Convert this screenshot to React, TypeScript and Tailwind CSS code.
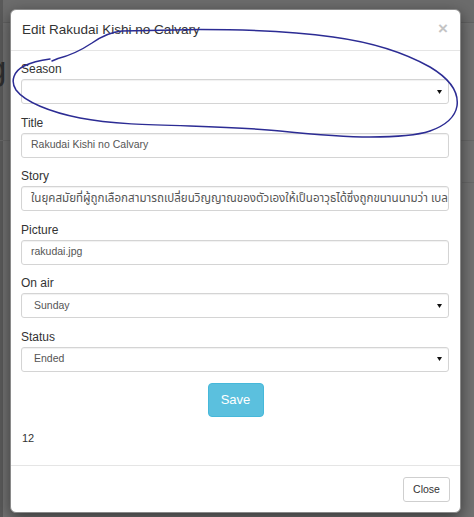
import React from "react";

function Arrow() {
  return (
    <svg width="5" height="5" viewBox="0 0 5 5" className="absolute right-[6px] top-1/2 -translate-y-1/2">
      <path d="M0 0.5 L5 0.5 L2.5 4.5 Z" fill="#111" />
    </svg>
  );
}

function Field({ label, children }: { label: string; children: React.ReactNode }) {
  return (
    <div className="flex flex-col">
      <div className="h-[16px] mb-[2px] text-[12px] leading-[16px] text-[#333]">{label}</div>
      {children}
    </div>
  );
}

function Input({ value, thai }: { value: string; thai?: boolean }) {
  return (
    <div
      className={`h-[25px] w-[428px] border border-[#d4d4d4] rounded-[3px] bg-white shadow-[inset_0_1px_1px_rgba(0,0,0,0.06)] pl-[9px] pr-[2px] flex items-center overflow-hidden whitespace-nowrap text-[#555] ${
        thai ? "text-[11.6px] font-['Noto_Sans_Thai','Noto_Sans','DejaVu_Sans',sans-serif]" : "text-[10.5px]"
      }`}
    >
      {value}
    </div>
  );
}

function Select({ value }: { value: string }) {
  return (
    <div className="relative h-[25px] w-[428px] border border-[#d4d4d4] rounded-[3px] bg-white shadow-[inset_0_1px_1px_rgba(0,0,0,0.06)] pl-[12px] flex items-center text-[10.5px] text-[#555]">
      {value}
      <Arrow />
    </div>
  );
}

export default function App() {
  return (
    <div className="relative w-[474px] h-[517px] overflow-hidden bg-[#727272] font-['Liberation_Sans',Arial,sans-serif]">
      {/* page behind the backdrop */}
      <div className="absolute inset-x-0 top-0 h-[23px] bg-[#6c6c6c] border-b border-[#626262]" />
      <div className="absolute left-0 top-0 bottom-0 w-[3px] bg-[#5a5a5a]" />
      <div className="absolute inset-x-0 top-[140px] h-px bg-[#686868]" />
      <div className="absolute right-0 w-[12px] top-[182px] h-px bg-[#686868]" />
      <div className="absolute left-[-12px] top-[52px] text-[33px] leading-none text-[#2e2e2e]">g</div>

      <div className="relative pl-[10px] pt-[9px]">
        <div className="w-[451px] h-[504px] bg-white rounded-[6px] border border-[#8a8a8a] shadow-[0_5px_15px_rgba(0,0,0,0.5)] flex flex-col overflow-hidden">
          {/* header */}
          <div className="h-[41px] shrink-0 border-b border-[#e5e5e5] flex items-center justify-between pl-[11px] pr-[12px]">
            <div className="text-[13.5px] text-[#333] pt-[1px]">Edit Rakudai Kishi no Calvary</div>
            <div className="text-[17px] font-bold leading-none text-[#c4c4c4] -mt-[4px]">×</div>
          </div>

          {/* body */}
          <div className="h-[414px] shrink-0 px-[10px] pt-[10px] flex flex-col">
            <div className="flex flex-col gap-[10.5px]">
              <Field label="Season">
                <Select value="" />
              </Field>
              <Field label="Title">
                <Input value="Rakudai Kishi no Calvary" />
              </Field>
              <Field label="Story">
                <Input thai value="ในยุคสมัยที่ผู้ถูกเลือกสามารถเปลี่ยนวิญญาณของตัวเองให้เป็นอาวุธได้ซึ่งถูกขนานนามว่า เบลเซอร์ และเด็กหนุ่มผู้ถูกขนานนามว่าอัศวินดีดตก" />
              </Field>
              <Field label="Picture">
                <Input value="rakudai.jpg" />
              </Field>
              <Field label="On air">
                <Select value="Sunday" />
              </Field>
              <Field label="Status">
                <Select value="Ended" />
              </Field>
            </div>
            <div className="flex justify-center mt-[11.5px]">
              <button className="w-[56px] h-[34px] rounded-[4px] bg-[#5bc0de] border border-[#46b8da] text-white text-[13px]">
                Save
              </button>
            </div>
            <div className="mt-[13px] h-[16px] leading-[16px] text-[11px] text-[#333] pl-[1px]">12</div>
          </div>

          {/* footer */}
          <div className="border-t border-[#e5e5e5] pt-[11px] pr-[10px] flex justify-end">
            <button className="w-[47px] h-[25px] rounded-[3px] bg-white border border-[#cfcfcf] text-[10.5px] text-[#333]">
              Close
            </button>
          </div>
        </div>
      </div>

      {/* hand-drawn annotation */}
      <svg className="absolute inset-0 pointer-events-none" width="474" height="517" viewBox="0 0 474 517">
        <path
          d="M52 61 L58 58.5 C68 56 80 51 92 43 C102 36 110 32 122 31 L200 29.5 C240 29.5 290 31 333 37 C370 42 405 53 430 67 C450 79 459 92 457 106 C455 118 444 126 430 131 C415 136 395 137 370 137 C340 137 310 134 280 131 C250 128 220 127 190 126 C150 125 110 124 80 118 C50 112 25 102 16 90 C10 81 14 71 24 66 C32 62 42 60 50 59"
          fill="none"
          stroke="#2c2c94"
          strokeWidth="1.5"
          strokeLinecap="round"
          strokeLinejoin="round"
        />
      </svg>
    </div>
  );
}
